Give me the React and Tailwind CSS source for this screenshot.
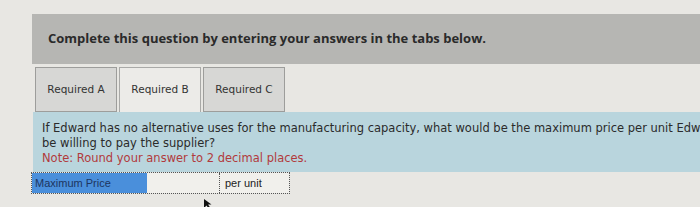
import React from "react";

const tabs = [
  { id: "a", label: "Required A" },
  { id: "b", label: "Required B" },
  { id: "c", label: "Required C" },
];

function Tabs({ active }) {
  return (
    <div className="ml-[35px] mt-[3px] flex h-[45px] items-stretch gap-[2px]">
      {tabs.map((tab) =>
        tab.id === active ? (
          <div
            key={tab.id}
            className="flex w-[82px] items-center justify-center border border-b-0 border-[#a9a9a7] bg-[#ecebe8] text-[10.5px] text-[#333]"
          >
            {tab.label}
          </div>
        ) : (
          <div
            key={tab.id}
            className="flex w-[82px] items-center justify-center border border-[#9d9d9b] bg-[#d7d7d5] text-[10.5px] text-[#333]"
          >
            {tab.label}
          </div>
        )
      )}
    </div>
  );
}

export default function App() {
  return (
    <div className="relative h-[207px] w-[700px] overflow-hidden bg-[#e8e7e3] font-['DejaVu_Sans',sans-serif]">
      <div className="h-[14px]" />
      <div className="ml-[32px] flex h-[50px] items-center bg-[#b6b6b3] pl-[16px]">
        <span className="font-['Open_Sans',sans-serif] text-[13px] font-bold text-[#2a2a2a]">
          Complete this question by entering your answers in the tabs below.
        </span>
      </div>

      <Tabs active="b" />

      <div className="ml-[33px] flex h-[60px] flex-col justify-center bg-[#b9d5dd] pl-[9px] pt-[2px] text-[11.5px] leading-[15px] text-[#2b2b2b]">
        <p className="whitespace-nowrap">
          If Edward has no alternative uses for the manufacturing capacity, what would be the maximum price per unit Edward would
        </p>
        <p>be willing to pay the supplier?</p>
        <p className="text-[#b23a3c]">Note: Round your answer to 2 decimal places.</p>
      </div>

      <div className="ml-[31px] flex h-[22px] w-[259px] border border-dotted border-[#555]">
        <div className="flex w-[115px] items-center bg-[#4a8fdb] pl-[3px] font-['Liberation_Sans',sans-serif] text-[11px] text-[#1d3560]">
          Maximum Price
        </div>
        <div className="w-[72px] bg-[#f1f0ec]" />
        <div className="flex flex-1 items-center border-l border-dotted border-[#555] bg-[#f1f0ec] pl-[5px] font-['Liberation_Sans',sans-serif] text-[11px] text-[#222]">
          per unit
        </div>
      </div>

      <svg className="absolute left-[203px] top-[199px]" width="10" height="10" viewBox="0 0 10 10">
        <path d="M1 0 L1 9 L3.5 6.5 L6 10 L7.5 9 L5 5.5 L8.5 5.5 Z" fill="#111" />
      </svg>
    </div>
  );
}
